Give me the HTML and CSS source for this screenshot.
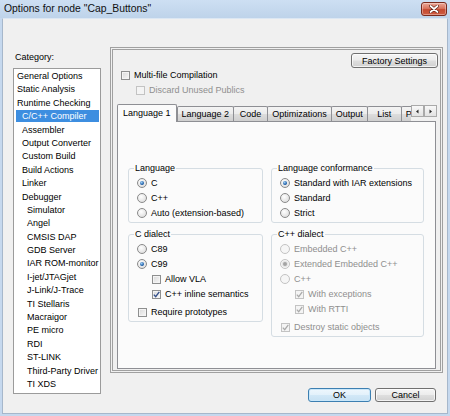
FILE: index.html
```html
<!DOCTYPE html>
<html>
<head>
<meta charset="utf-8">
<title>Options for node "Cap_Buttons"</title>
<link rel="stylesheet" href="styles.css">
</head>
<body>
<div class="window">
  <div class="titlebar">
    <span class="title">Options for node "Cap_Buttons"</span>
    <span class="close">
      <svg width="10" height="8" viewBox="0 0 10 8">
        <path d="M1.5 1 L8.5 7 M8.5 1 L1.5 7" stroke="#5b1c12" stroke-width="3" stroke-linecap="round"/>
        <path d="M1.5 1 L8.5 7 M8.5 1 L1.5 7" stroke="#ffffff" stroke-width="1.7" stroke-linecap="round"/>
      </svg>
    </span>
  </div>
  <div class="content">
    <div class="left">
      <div class="cat-label">Category:</div>
      <ul class="listbox">
        <li>General Options</li>
        <li>Static Analysis</li>
        <li>Runtime Checking</li>
        <li class="l1 selected">C/C++ Compiler</li>
        <li class="l1">Assembler</li>
        <li class="l1">Output Converter</li>
        <li class="l1">Custom Build</li>
        <li class="l1">Build Actions</li>
        <li class="l1">Linker</li>
        <li class="l1">Debugger</li>
        <li class="l2">Simulator</li>
        <li class="l2">Angel</li>
        <li class="l2">CMSIS DAP</li>
        <li class="l2">GDB Server</li>
        <li class="l2">IAR ROM-monitor</li>
        <li class="l2">I-jet/JTAGjet</li>
        <li class="l2">J-Link/J-Trace</li>
        <li class="l2">TI Stellaris</li>
        <li class="l2">Macraigor</li>
        <li class="l2">PE micro</li>
        <li class="l2">RDI</li>
        <li class="l2">ST-LINK</li>
        <li class="l2">Third-Party Driver</li>
        <li class="l2">TI XDS</li>
      </ul>
    </div>
    <div class="right">
      <div class="frame">
        <div class="factory-row"><div class="btn factory">Factory Settings</div></div>
        <div class="check-row multi"><span class="cb"></span><span>Multi-file Compilation</span></div>
        <div class="check-row discard dis"><span class="cb"></span><span>Discard Unused Publics</span></div>
        <div class="tabs">
          <div class="tabstrip">
            <div class="tablist">
              <span class="tab active">Language 1</span>
              <span class="tab">Language 2</span>
              <span class="tab">Code</span>
              <span class="tab">Optimizations</span>
              <span class="tab">Output</span>
              <span class="tab">List</span>
              <span class="tab">Preprocessor</span>
            </div>
            <div class="scroll">
              <span class="arrow"><svg width="5" height="5" viewBox="0 0 5 5"><path d="M3.5 0.5 L1 2.5 L3.5 4.5 Z" fill="#2b2b2b"/></svg></span>
              <span class="arrow"><svg width="5" height="5" viewBox="0 0 5 5"><path d="M1.5 0.5 L4 2.5 L1.5 4.5 Z" fill="#2b2b2b"/></svg></span>
            </div>
          </div>
          <div class="tabpage">
            <fieldset class="group">
              <legend>Language</legend>
              <div class="opt"><span class="radio on"></span><span>C</span></div>
              <div class="opt"><span class="radio"></span><span>C++</span></div>
              <div class="opt"><span class="radio"></span><span>Auto (extension-based)</span></div>
            </fieldset>
            <fieldset class="group">
              <legend>Language conformance</legend>
              <div class="opt"><span class="radio on"></span><span>Standard with IAR extensions</span></div>
              <div class="opt"><span class="radio"></span><span>Standard</span></div>
              <div class="opt"><span class="radio"></span><span>Strict</span></div>
            </fieldset>
            <fieldset class="group">
              <legend>C dialect</legend>
              <div class="opt"><span class="radio"></span><span>C89</span></div>
              <div class="opt"><span class="radio on"></span><span>C99</span></div>
              <div class="opt sub"><span class="cb"></span><span>Allow VLA</span></div>
              <div class="opt sub"><span class="cb"><svg width="7" height="7" viewBox="0 0 7 7"><path d="M0.8 3.6 L2.7 5.7 L6.3 0.9" fill="none" stroke="#34508a" stroke-width="1.4"/></svg></span><span>C++ inline semantics</span></div>
              <div class="opt top cbx"><span class="cb"></span><span>Require prototypes</span></div>
            </fieldset>
            <fieldset class="group">
              <legend>C++ dialect</legend>
              <div class="opt dis"><span class="radio"></span><span>Embedded C++</span></div>
              <div class="opt dis"><span class="radio on"></span><span>Extended Embedded C++</span></div>
              <div class="opt dis"><span class="radio"></span><span>C++</span></div>
              <div class="opt sub dis"><span class="cb"><svg width="7" height="7" viewBox="0 0 7 7"><path d="M0.8 3.6 L2.7 5.7 L6.3 0.9" fill="none" stroke="#a9a9a9" stroke-width="1.2"/></svg></span><span>With exceptions</span></div>
              <div class="opt sub dis"><span class="cb"><svg width="7" height="7" viewBox="0 0 7 7"><path d="M0.8 3.6 L2.7 5.7 L6.3 0.9" fill="none" stroke="#a9a9a9" stroke-width="1.2"/></svg></span><span>With RTTI</span></div>
              <div class="opt top cbx dis"><span class="cb"><svg width="7" height="7" viewBox="0 0 7 7"><path d="M0.8 3.6 L2.7 5.7 L6.3 0.9" fill="none" stroke="#a9a9a9" stroke-width="1.2"/></svg></span><span>Destroy static objects</span></div>
            </fieldset>
          </div>
        </div>
      </div>
      <div class="actions">
        <div class="btn ok">OK</div>
        <div class="btn cancel">Cancel</div>
      </div>
    </div>
  </div>
</div>
</body>
</html>
```

FILE: styles.css
```css
* { box-sizing: border-box; }
html, body { margin: 0; padding: 0; }
body {
  width: 450px;
  height: 416px;
  overflow: hidden;
  font-family: "Liberation Sans", Arial, sans-serif;
  font-size: 9px;
  color: #000000;
  background: #c5d8ee;
}
.window {
  width: 450px;
  height: 416px;
  display: flex;
  flex-direction: column;
  background: #c5d8ee;
  padding: 0 2px 2px;
}
.titlebar {
  height: 18px;
  flex: none;
  display: flex;
  justify-content: space-between;
  align-items: flex-start;
  background: linear-gradient(#cddff3, #bed3ea);
  margin: 0 -2px;
  padding: 0 2px;
}
.title {
  font-size: 10.4px;
  line-height: 18px;
  padding-left: 2px;
  color: #101010;
  white-space: nowrap;
}
.close {
  width: 26px;
  height: 14px;
  margin: 2px 1px 0 0;
  border: 1px solid #7a2a1d;
  border-radius: 3px;
  background: linear-gradient(#eca898, #d9755f 45%, #c54a31 55%, #cf5d43);
  box-shadow: inset 0 0 0 1px rgba(255, 255, 255, 0.35);
  display: flex;
  align-items: center;
  justify-content: center;
}
.content {
  flex: 1;
  background: #f0f0f0;
  border: 1px solid #a6b7cb;
  border-top-color: #dce7f3;
  display: flex;
  align-items: flex-start;
}
.left {
  width: 88px;
  flex: none;
  margin: 32.5px 0 0 10px;
}
.cat-label {
  line-height: 11px;
  padding-left: 2px;
}
.listbox {
  list-style: none;
  margin: 5.5px 0 0;
  padding: 1px 0 0;
  height: 326px;
  border: 1px solid #9b9b9b;
  background: #ffffff;
}
.listbox li {
  height: 12px;
  line-height: 12px;
  margin: 0 1px 1.4px 0;
  padding-left: 3px;
  white-space: nowrap;
}
.listbox li.l1 { margin-left: 2px; padding-left: 6px; }
.listbox li.l2 { margin-left: 2px; padding-left: 11px; }
.listbox li.selected { background: #3d8ee0; color: #ffffff; }

.right {
  width: 333px;
  flex: none;
  margin: 28px 0 0 9px;
  display: flex;
  flex-direction: column;
}
.frame {
  height: 326px;
  border: 3px double #a0a0a0;
  display: flex;
  flex-direction: column;
}
.factory-row {
  display: flex;
  justify-content: flex-end;
  padding: 3px 2px 0 0;
}
.btn {
  height: 14px;
  border: 1px solid #707070;
  border-radius: 3px;
  background: linear-gradient(#f5f5f5, #ececec 48%, #dedede 52%, #d1d1d1);
  box-shadow: inset 0 0 0 1px rgba(255, 255, 255, 0.7);
  display: flex;
  align-items: center;
  justify-content: center;
  white-space: nowrap;
  color: #000;
}
.factory { width: 87px; height: 15px; }
.check-row {
  height: 11px;
  display: flex;
  align-items: center;
  gap: 4px;
  white-space: nowrap;
}
.check-row.multi { margin-top: 1.5px; padding-left: 8px; }
.check-row.discard { margin-top: 4px; padding-left: 23px; }

.cb {
  width: 9px;
  height: 9px;
  flex: none;
  border: 1px solid #8e8f8f;
  background: linear-gradient(135deg, #d9d9d9, #f8f8f8);
  box-shadow: inset 0 0 0 1px #f4f4f4;
  display: flex;
  align-items: center;
  justify-content: center;
}
.radio {
  width: 10px;
  height: 10px;
  flex: none;
  border-radius: 50%;
  border: 1px solid #8a8a8a;
  background: radial-gradient(circle at 40% 35%, #ffffff, #d6d6d6);
  display: flex;
  align-items: center;
  justify-content: center;
}
.radio.on::after {
  content: "";
  width: 4px;
  height: 4px;
  border-radius: 50%;
  background: radial-gradient(circle at 40% 35%, #9fd0f7, #0c4f9c 70%);
}
.dis { color: #8f8f8f; }
.dis .cb { border-color: #c3c3c3; background: #f4f4f4; box-shadow: none; }
.dis .radio { border-color: #c3c3c3; background: #f6f6f6; }
.dis .radio.on::after {
  background: #a4a4a4;
  box-shadow: 0 0 0 1px #e3e3e3;
}

.tabs {
  flex: 1;
  margin: 8.5px 4px 1px;
  display: flex;
  flex-direction: column;
}
.tabstrip {
  height: 17px;
  flex: none;
  display: flex;
  align-items: flex-start;
  position: relative;
  z-index: 1;
}
.tablist {
  width: 294px;
  height: 18px;
  flex: none;
  display: flex;
  align-items: flex-end;
  overflow: hidden;
}
.tab {
  height: 15px;
  margin-bottom: 1px;
  margin-right: -1px;
  min-width: 35px;
  padding: 0 4px;
  flex: none;
  border: 1px solid #8e8f94;
  border-bottom: 0;
  border-radius: 2px 2px 0 0;
  background: linear-gradient(#f4f4f4, #ebebeb 50%, #dddddd 50%, #cfcfcf);
  line-height: 14px;
  text-align: center;
  white-space: nowrap;
}
.tab.active {
  height: 18px;
  margin-bottom: 0;
  margin-right: 0;
  padding: 0 5px;
  background: #fbfbfb;
  line-height: 16px;
}
.scroll {
  display: flex;
  margin-top: 1px;
}
.arrow {
  width: 13px;
  height: 12px;
  border: 1px solid #a9a9a9;
  background: linear-gradient(#f8f8f8, #e2e2e2);
  display: flex;
  align-items: center;
  justify-content: center;
}
.tabpage {
  flex: 1;
  border: 1px solid #8e8f94;
  background: #fbfbfb;
  padding: 40.5px 0 0 10px;
  display: grid;
  grid-template-columns: 135px 153px;
  column-gap: 8px;
  row-gap: 6px;
  align-items: start;
  align-content: start;
}
.group {
  margin: 0;
  min-width: 0;
  border: 1px solid #d5dde3;
  border-radius: 3px;
  padding: 2px 5px 1px;
}
.group legend {
  padding: 0 1px;
  line-height: 11px;
}
.opt {
  height: 15px;
  display: flex;
  align-items: center;
  gap: 4px;
  white-space: nowrap;
}
.opt .radio { margin-left: 3px; }
.opt.sub .cb { margin-left: 18px; }
.opt.cbx .cb { margin-left: 4px; }
.opt.top { margin-top: 3px; }

.actions {
  display: flex;
  justify-content: flex-end;
  gap: 4px;
  margin-top: 15px;
  padding-right: 7px;
}
.ok {
  width: 63px;
  border-color: #3c7fb1;
  box-shadow: inset 0 0 0 1px #c9e7fa;
  background: linear-gradient(#eef7fd, #e3f1fb 48%, #d2e8f7 52%, #c7e1f3);
}
.cancel { width: 61px; }
.dis, .dis span { color: #8f8f8f; }
```
